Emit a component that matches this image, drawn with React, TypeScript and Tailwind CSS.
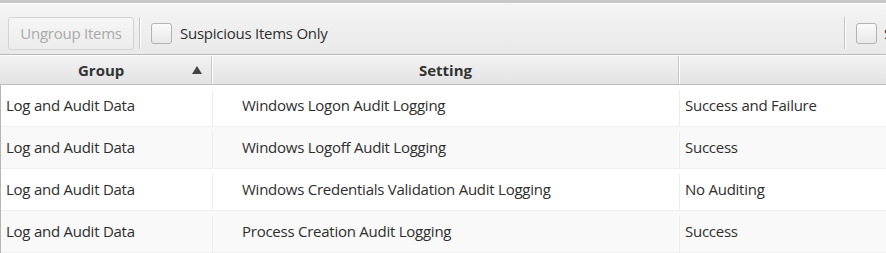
import React from "react";

const rows = [
  { group: "Log and Audit Data", setting: "Windows Logon Audit Logging", value: "Success and Failure" },
  { group: "Log and Audit Data", setting: "Windows Logoff Audit Logging", value: "Success" },
  { group: "Log and Audit Data", setting: "Windows Credentials Validation Audit Logging", value: "No Auditing" },
  { group: "Log and Audit Data", setting: "Process Creation Audit Logging", value: "Success" },
];

function Separator() {
  return (
    <div className="flex h-[32px] shrink-0">
      <div className="w-px bg-[#c4c4c4]" />
      <div className="w-px bg-white" />
    </div>
  );
}

function CheckBox() {
  return (
    <div className="h-[21px] w-[21px] shrink-0 rounded-[3px] border border-[#b3b3b3] bg-gradient-to-b from-[#fafafa] to-[#e8e8e8]" />
  );
}

export default function App() {
  return (
    <div className="h-[253px] w-[886px] overflow-hidden bg-white font-['Open_Sans',sans-serif] text-[15px] tracking-[-0.25px] text-[#2e2e2e]">
      {/* top strip */}
      <div className="h-[3px] bg-[#c8c8c8]" />

      {/* toolbar */}
      <div className="box-border flex h-[52px] items-center border-t border-b border-t-[#fbfbfb] border-b-[#b9b9b9] bg-gradient-to-b from-[#f4f4f4] to-[#e9e9e9] pt-[9px] pb-[1px]">
        <button
          disabled
          className="ml-[8px] flex h-[33px] w-[126px] shrink-0 items-center justify-center rounded-[3px] border border-[#d4d4d4] bg-gradient-to-b from-[#f6f6f6] to-[#ececec] text-[#a9a9a9]"
        >
          Ungroup Items
        </button>
        <div className="ml-[5px]">
          <Separator />
        </div>
        <div className="ml-[10px]">
          <CheckBox />
        </div>
        <span className="ml-[8px] whitespace-nowrap">Suspicious Items Only</span>
        <div className="ml-auto flex items-center">
          <Separator />
          <div className="ml-[10px]">
            <CheckBox />
          </div>
          <span className="ml-[7px] w-[2px] overflow-hidden whitespace-nowrap">Show</span>
        </div>
      </div>

      {/* header */}
      <div className="flex h-[30px] border-b border-[#bdbdbd] border-t border-t-[#fdfdfd] bg-gradient-to-b from-[#f2f2f2] to-[#e3e3e3] font-bold tracking-normal text-[#333]">
        <div className="flex w-[212px] shrink-0 items-center border-r border-[#c9c9c9]">
          <span className="ml-[78px]">Group</span>
          <svg width="10" height="8" viewBox="0 0 10 8" className="ml-auto mr-[9px]">
            <polygon points="5,0 10,8 0,8" fill="#444" />
          </svg>
        </div>
        <div className="w-px bg-white" />
        <div className="flex w-[466px] shrink-0 items-center justify-center border-r border-[#c9c9c9]">
          Setting
        </div>
        <div className="w-px bg-white" />
        <div className="flex-1" />
      </div>

      {/* rows */}
      <div className="border-l border-[#b5b5b5]">
        {rows.map((r, i) => (
          <div
            key={i}
            className={`flex h-[42px] border-b border-[#f0f0f0] ${i % 2 === 1 ? "bg-[#f9f9f9]" : "bg-white"}`}
          >
            <div className="flex w-[211px] shrink-0 items-center pl-[5px] whitespace-nowrap">{r.group}</div>
            <div className="mt-[5px] w-px bg-[#ececec]" />
            <div className="flex w-[466px] shrink-0 items-center pl-[29px] whitespace-nowrap">{r.setting}</div>
            <div className="mt-[5px] w-px bg-[#ececec]" />
            <div className="flex flex-1 items-center pl-[5px] whitespace-nowrap">{r.value}</div>
          </div>
        ))}
      </div>
    </div>
  );
}
